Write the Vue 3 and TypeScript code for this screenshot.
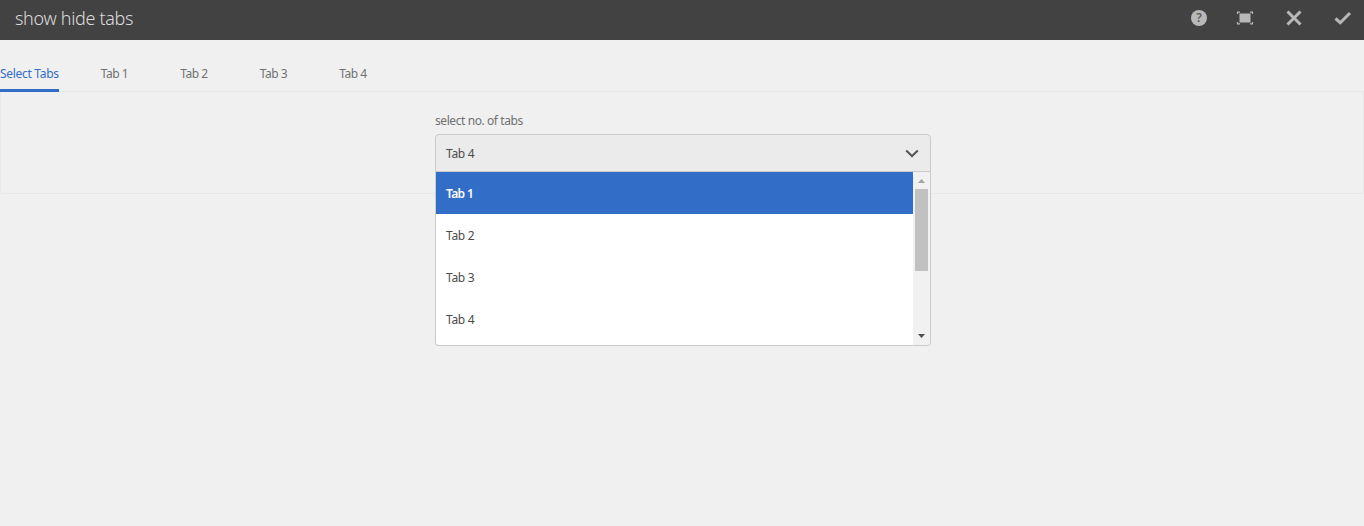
<script setup lang="ts">
const tabs: string[] = ['Select Tabs', 'Tab 1', 'Tab 2', 'Tab 3', 'Tab 4']
const options: string[] = ['Tab 1', 'Tab 2', 'Tab 3', 'Tab 4']
</script>

<template>
  <div class="page">
    <header class="bar">
      <h1 class="title">show hide tabs</h1>
      <div class="actions">
        <svg class="ic" width="18" height="18" viewBox="0 0 18 18">
          <circle cx="9" cy="9" r="8" fill="#b8b8b8" />
          <text x="9" y="13.2" text-anchor="middle" class="q">?</text>
        </svg>
        <svg class="ic" width="18" height="18" viewBox="0 0 18 18">
          <rect x="3.5" y="4.5" width="11" height="9" fill="#b8b8b8" />
          <path d="M1.5 5V3.2h2.5M14 3.2h2.5V5M16.5 13v1.8H14M4 14.8H1.5V13" fill="none" stroke="#b8b8b8" stroke-width="1.2" />
        </svg>
        <svg class="ic" width="18" height="18" viewBox="0 0 18 18">
          <path d="M2.5 2.5l13 13M15.5 2.5l-13 13" fill="none" stroke="#b8b8b8" stroke-width="3" />
        </svg>
        <svg class="ic" width="18" height="18" viewBox="0 0 18 18">
          <path d="M1.5 9.5l4.8 4.2L16 4" fill="none" stroke="#b8b8b8" stroke-width="3" />
        </svg>
      </div>
    </header>

    <nav class="tabs">
      <span v-for="(t, i) in tabs" :key="t" class="tab" :class="{ active: i === 0 }">{{ t }}</span>
    </nav>

    <section class="panel">
      <div class="field">
        <label class="label">select no. of tabs</label>
        <div class="select">
          <span>Tab 4</span>
          <svg width="14" height="9" viewBox="0 0 14 9">
            <path d="M1.2 1.5L7 7l5.8-5.5" fill="none" stroke="#555" stroke-width="2" />
          </svg>
        </div>
        <div class="menu">
          <ul class="list">
            <li v-for="(o, i) in options" :key="o" class="opt" :class="{ sel: i === 0 }">{{ o }}</li>
          </ul>
          <div class="scroll">
            <svg class="arrow up" width="7" height="4" viewBox="0 0 7 4"><path d="M0 4L3.5 0 7 4z" fill="#a3a3a3" /></svg>
            <div class="track"><div class="thumb"></div></div>
            <svg class="arrow down" width="7" height="4" viewBox="0 0 7 4"><path d="M0 0h7L3.5 4z" fill="#505050" /></svg>
          </div>
        </div>
      </div>
    </section>
  </div>
</template>

<style>
html, body { margin: 0; background: #f0f0f0; }
</style>

<style scoped>
.page {
  height: 526px;
  overflow: hidden;
  background: #f0f0f0;
  font-family: "Noto Sans", "Open Sans", sans-serif;
}
.bar {
  height: 40px;
  background: #424242;
  display: flex;
  align-items: center;
  justify-content: space-between;
  padding: 0 12px 0 15px;
}
.title {
  margin: 0;
  font-size: 18px;
  font-weight: 300;
  letter-spacing: -0.32px;
  color: #dcdcdc;
  position: relative;
  top: -2px;
}
.actions { display: flex; align-items: center; gap: 31px; }
.ic { display: block; margin-top: -4px; }
.ic:first-child { margin-right: -3px; }
.q { font: 600 12px "Noto Sans", sans-serif; fill: #5a5a5a; }
.tabs {
  height: 52px;
  box-sizing: border-box;
  display: flex;
  border-bottom: 1px solid #e6e6e6;
}
.tab {
  width: 79.5px;
  height: 51px;
  box-sizing: border-box;
  padding-top: 26px;
  font-size: 12px;
  line-height: 16px;
  letter-spacing: -0.45px;
  color: #707070;
}
.tab.active {
  width: auto;
  margin-right: 42px;
  letter-spacing: -0.3px;
  color: #326ec8;
  border-bottom: 3px solid #326ec8;
  height: 52px;
}
.panel {
  height: 102px;
  box-sizing: border-box;
  border: 1px solid #e8e8e8;
  border-top: 0;
  padding: 20px 0 0 434px;
}
.field { width: 496px; position: relative; }
.label {
  display: block;
  height: 22px;
  font-size: 12px;
  line-height: 17px;
  letter-spacing: -0.42px;
  color: #707070;
}
.select {
  height: 38px;
  box-sizing: border-box;
  border: 1px solid #cacaca;
  border-radius: 4px 4px 0 0;
  background: #ebebeb;
  display: flex;
  align-items: center;
  justify-content: space-between;
  padding: 0 11px 0 10px;
  font-size: 12px;
  letter-spacing: -0.3px;
  color: #4b4b4b;
}
.menu {
  position: absolute;
  left: 0;
  right: 0;
  top: 60px;
  height: 174px;
  box-sizing: border-box;
  background: #fff;
  border: 1px solid #cacaca;
  border-top: 0;
  border-radius: 0 0 4px 4px;
  display: flex;
  overflow: hidden;
}
.list { list-style: none; margin: 0; padding: 0; flex: 1; }
.opt {
  height: 42px;
  line-height: 44px;
  padding-left: 10px;
  font-size: 12px;
  letter-spacing: -0.3px;
  color: #4b4b4b;
}
.opt.sel {
  background: #326ec8;
  color: #fff;
  font-weight: 600;
  letter-spacing: -0.65px;
}
.scroll {
  width: 17px;
  background: #f1f1f1;
  display: flex;
  flex-direction: column;
  align-items: center;
}
.arrow { flex: none; }
.arrow.up { margin: 7px 0 6px; }
.arrow.down { margin-bottom: 7px; }
.track { flex: 1; width: 100%; }
.thumb { height: 82px; width: 13px; margin: 0 2px; background: #c1c1c1; }
</style>
